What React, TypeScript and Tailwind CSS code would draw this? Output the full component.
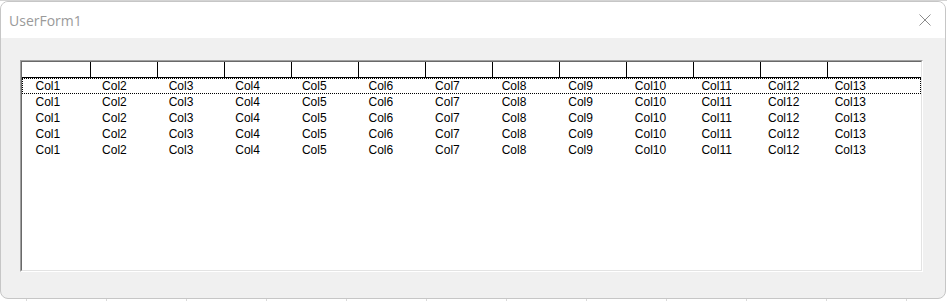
import React from "react";

const columns = Array.from({ length: 13 }, (_, i) => `Col${i + 1}`);
const rows = [0, 1, 2, 3, 4];

function CloseIcon() {
  return (
    <svg width="12" height="12" viewBox="0 0 12 12" className="block">
      <path d="M0.5 0.5 L11.5 11.5 M11.5 0.5 L0.5 11.5" stroke="#8c8c8c" strokeWidth="1" fill="none" />
    </svg>
  );
}

function ListBox() {
  return (
    <div className="w-[903px] h-[212px] border-t border-l border-[#a0a0a0] border-r border-b border-r-white border-b-white">
      <div className="h-full bg-white border-t border-l border-[#696969] border-r border-b border-r-[#e3e3e3] border-b-[#e3e3e3] flex flex-col">
        {/* column headers */}
        <div className="flex h-[16px] border-b border-black shrink-0">
          {columns.map((c, i) =>
            i === columns.length - 1 ? (
              <div key={c} className="flex-1" />
            ) : (
              <div key={c} className={`${i === 0 ? "w-[69px]" : "w-[67px]"} shrink-0 border-r border-black`} />
            )
          )}
        </div>
        {rows.map((r) => (
          <div
            key={r}
            className={`flex h-[16px] shrink-0 pl-[12.5px] border ${
              r === 0 ? "border-dotted border-black" : "border-transparent"
            } text-[12px] leading-[15px] text-black font-['Liberation_Sans',Arial,sans-serif]`}
          >
            {columns.map((c) => (
              <div key={c} className="w-[66.6px] shrink-0 whitespace-nowrap">
                {c}
              </div>
            ))}
          </div>
        ))}
      </div>
    </div>
  );
}

export default function App() {
  return (
    <div className="w-[947px] h-[301px] overflow-hidden bg-white bg-[linear-gradient(to_right,#dadada_1px,transparent_1px)] bg-[size:80px_20px] bg-[position:26px_0]">
      <div className="h-px bg-[#d4d4d4]" />
      <div className="w-[946px] h-[298px] rounded-[8px] border border-[#c6c6c6] overflow-hidden flex flex-col bg-[#f0f0f0]">
        <div className="h-[36px] shrink-0 bg-white flex items-start justify-between">
          <span className="pl-[8px] pt-[1px] leading-[36px] text-[14px] text-[#9a9a9a] font-['Open_Sans','Noto_Sans',sans-serif]">
            UserForm1
          </span>
          <div className="pt-[12px] pr-[14px]">
            <CloseIcon />
          </div>
        </div>
        <div className="flex-1 pt-[22px] pl-[19px]">
          <ListBox />
        </div>
      </div>
    </div>
  );
}
